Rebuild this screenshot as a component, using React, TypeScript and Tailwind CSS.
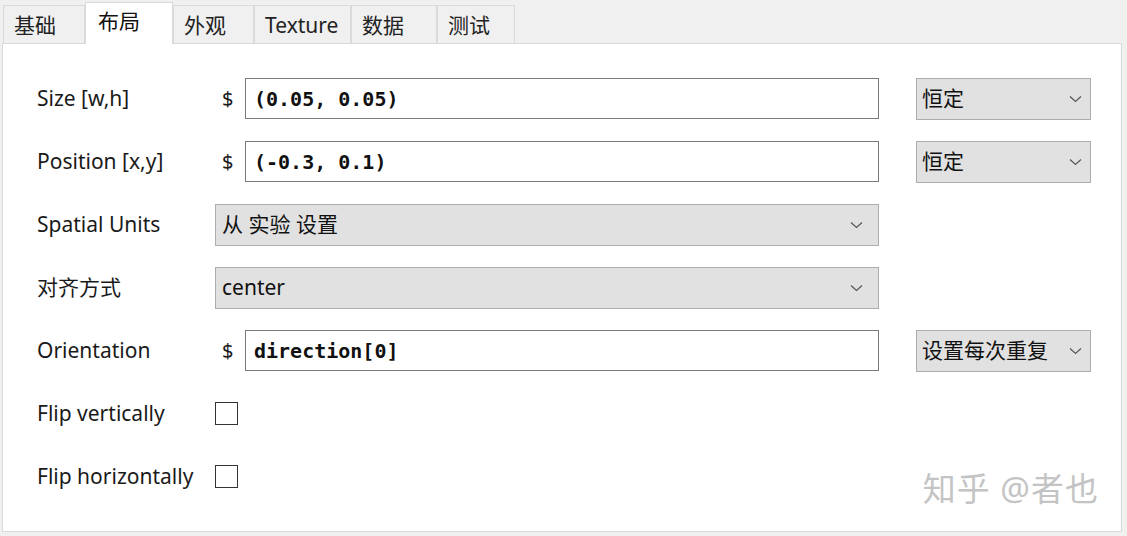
import React from "react";

const FONT = { fontFamily: '"Noto Sans", "Noto Sans CJK SC", sans-serif' };
const MONO = { fontFamily: '"DejaVu Sans Mono", "Liberation Mono", monospace' };

function Chevron() {
  return (
    <svg width="13" height="8" viewBox="0 0 13 8" className="shrink-0">
      <path d="M1 1.5 L6.5 6.5 L12 1.5" fill="none" stroke="#555" strokeWidth="1.2" />
    </svg>
  );
}

function Tab({ label, active, w }: { label: string; active?: boolean; w: string }) {
  if (active) {
    return (
      <div className={`${w} h-[42px] mt-[2px] -mb-[1px] bg-white border border-[#dadada] border-b-0 flex items-start pt-[3px] pl-[12px] text-[21px] text-[#111] z-10 relative`}>
        {label}
      </div>
    );
  }
  return (
    <div className={`${w} h-[38px] mt-[5px] bg-[#f0f0f0] border border-[#dadada] border-b-0 flex items-start pt-[4px] pl-[10px] text-[21px] text-[#222]`}>
      {label}
    </div>
  );
}

function Label({ children }: { children: React.ReactNode }) {
  return <div className="w-[178px] shrink-0 text-[21px] text-[#1a1a1a]">{children}</div>;
}

function Dollar() {
  return <div className="w-[30px] shrink-0 pl-[7px] text-[20px] text-[#1a1a1a]">$</div>;
}

function TextInput({ value }: { value: string }) {
  return (
    <div
      className="w-[634px] h-[41px] border border-[#7a7a7a] bg-white flex items-center pl-[8px] text-[20px] font-bold text-[#111]"
      style={MONO}
    >
      {value}
    </div>
  );
}

function SmallSelect({ value }: { value: string }) {
  return (
    <div className="ml-[37px] w-[175px] h-[42px] border border-[#adadad] bg-[#e1e1e1] flex items-center justify-between pl-[5px] pr-[8px] text-[21px] text-[#111]">
      <span>{value}</span>
      <Chevron />
    </div>
  );
}

function WideSelect({ value }: { value: string }) {
  return (
    <div className="w-[664px] h-[42px] border border-[#adadad] bg-[#e1e1e1] flex items-center justify-between pl-[6px] pr-[15px] text-[21px] text-[#111]">
      <span>{value}</span>
      <Chevron />
    </div>
  );
}

function Checkbox() {
  return <div className="w-[23px] h-[23px] border border-[#333] bg-white" />;
}

export default function App() {
  return (
    <div className="w-[1127px] h-[536px] bg-[#f0f0f0] flex flex-col" style={FONT}>
      <div className="flex pl-[3px] h-[43px] items-start">
        <Tab label="基础" w="w-[82px]" />
        <Tab label="布局" active w="w-[88px]" />
        <Tab label="外观" w="w-[81px]" />
        <Tab label="Texture" w="w-[97px]" />
        <Tab label="数据" w="w-[86px]" />
        <Tab label="测试" w="w-[78px]" />
      </div>
      <div className="relative ml-[2px] mr-[5px] h-[489px] bg-white border border-[#dadada] pl-[34px] pt-[23px] flex flex-col">
        <div className="h-[63px] flex items-center">
          <Label>Size [w,h]</Label>
          <Dollar />
          <TextInput value="(0.05, 0.05)" />
          <SmallSelect value="恒定" />
        </div>
        <div className="h-[63px] flex items-center">
          <Label>Position [x,y]</Label>
          <Dollar />
          <TextInput value="(-0.3, 0.1)" />
          <SmallSelect value="恒定" />
        </div>
        <div className="h-[63px] flex items-center">
          <Label>Spatial Units</Label>
          <WideSelect value="从 实验 设置" />
        </div>
        <div className="h-[63px] flex items-center">
          <Label>对齐方式</Label>
          <WideSelect value="center" />
        </div>
        <div className="h-[63px] flex items-center">
          <Label>Orientation</Label>
          <Dollar />
          <TextInput value="direction[0]" />
          <SmallSelect value="设置每次重复" />
        </div>
        <div className="h-[63px] flex items-center">
          <Label>Flip vertically</Label>
          <Checkbox />
        </div>
        <div className="h-[63px] flex items-center">
          <Label>Flip horizontally</Label>
          <Checkbox />
        </div>
        <div className="absolute right-[22px] bottom-[18px] text-[33px] text-[#c4c4c4] tracking-[1px]">
          知乎 @者也
        </div>
      </div>
    </div>
  );
}
